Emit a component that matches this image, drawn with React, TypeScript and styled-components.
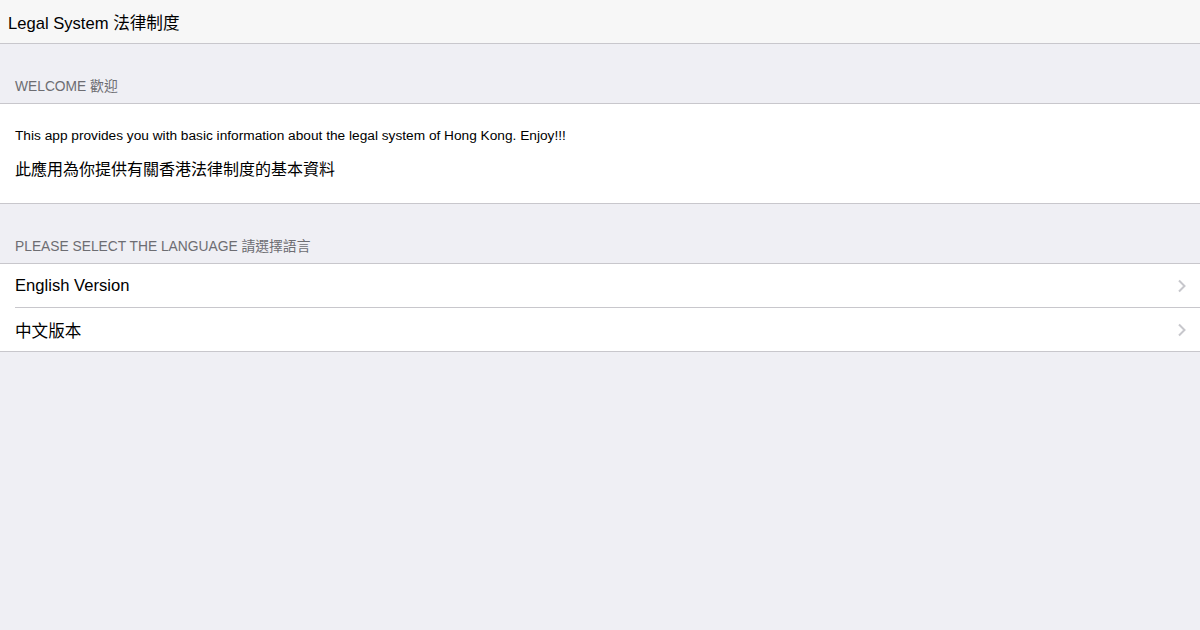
import React from "react";
import styled, { createGlobalStyle } from "styled-components";

const GlobalStyle = createGlobalStyle`
  html, body {
    margin: 0;
    padding: 0;
    background: #efeff4;
    font-family: "Liberation Sans", "Noto Sans CJK TC", Arial, sans-serif;
    color: #000;
  }
`;

const Page = styled.div`
  min-height: 630px;
  background: #efeff4;
`;

const Header = styled.div`
  height: 43px;
  display: flex;
  align-items: center;
  padding: 0 8px;
  background: #f7f7f7;
  border-bottom: 1px solid #c8c7cc;
  font-size: 16.6px;
`;

const SectionTitle = styled.div`
  padding: 34px 15px 8px;
  line-height: 17px;
  font-size: 13.8px;
  color: #6d6d72;
  text-transform: uppercase;
`;

const Card = styled.div`
  background: #fff;
  border-top: 1px solid #c8c7cc;
  border-bottom: 1px solid #c8c7cc;
  padding: 22px 15px 23px;
`;

const Text = styled.p<{ $size?: number }>`
  margin: 0;
  font-size: ${(p) => p.$size || 13.7}px;
  line-height: 20px;

  & + & {
    margin-top: 14px;
  }
`;

const List = styled.div`
  background: #fff;
  border-top: 1px solid #c8c7cc;
  border-bottom: 1px solid #c8c7cc;
`;

const Row = styled.div`
  padding-left: 15px;
  cursor: pointer;

  & + & > div {
    border-top: 1px solid #c8c7cc;
  }
`;

const RowInner = styled.div`
  height: 43px;
  display: flex;
  align-items: center;
  justify-content: space-between;
  padding-right: 13px;
  font-size: 16.6px;
`;

const Chevron = () => (
  <svg width="10" height="14" viewBox="0 0 10 14">
    <polyline
      points="2,1.5 7.5,7 2,12.5"
      fill="none"
      stroke="#c7c7cc"
      strokeWidth="2"
    />
  </svg>
);

const App = () => (
  <Page>
    <GlobalStyle />
    <Header>Legal System 法律制度</Header>

    <SectionTitle>Welcome 歡迎</SectionTitle>
    <Card>
      <Text>
        This app provides you with basic information about the legal system of
        Hong Kong. Enjoy!!!
      </Text>
      <Text $size={16}>此應用為你提供有關香港法律制度的基本資料</Text>
    </Card>

    <SectionTitle>Please select the language 請選擇語言</SectionTitle>
    <List>
      <Row>
        <RowInner>
          English Version
          <Chevron />
        </RowInner>
      </Row>
      <Row>
        <RowInner>
          中文版本
          <Chevron />
        </RowInner>
      </Row>
    </List>
  </Page>
);

export default App;
